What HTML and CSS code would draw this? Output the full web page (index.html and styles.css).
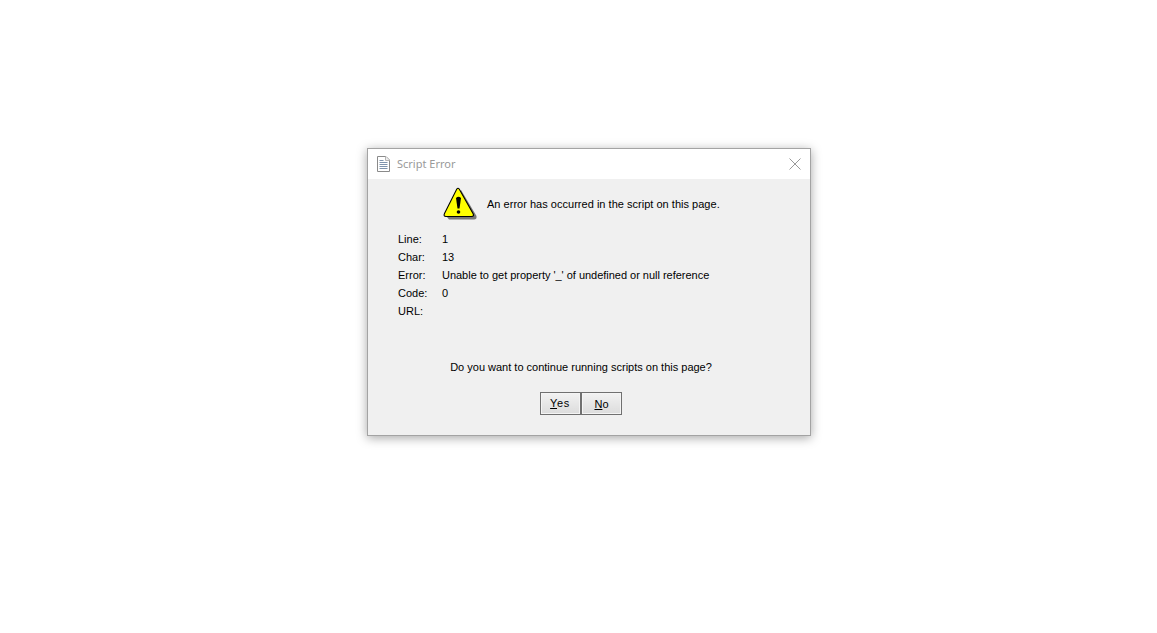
FILE: index.html
```html
<!DOCTYPE html>
<html lang="en">
<head>
<meta charset="utf-8">
<title>Script Error</title>
<link rel="stylesheet" href="styles.css">
</head>
<body>
<div class="dialog">
  <div class="titlebar">
    <svg class="doc-icon" width="14" height="16" viewBox="0 0 14 16">
      <path d="M.5.5h8.500l3.500 3.500v11.500H.5z" fill="#fff" stroke="#8a8a8a"/>
      <path d="M8.500.5v4h4" fill="#eee" stroke="#b5b5b5"/>
      <path d="M2.500 4.500h4M2.500 6.500h8M2.500 8.500h8M2.500 10.500h8M2.500 12.500h8" stroke="#7f94ad" fill="none"/>
    </svg>
    <span class="title">Script Error</span>
    <svg class="close" width="12" height="12" viewBox="0 0 12 12">
      <path d="M.5.5l11 11M11.500.5l-11 11" stroke="#999" fill="none"/>
    </svg>
  </div>
  <div class="content">
    <div class="headline">
      <svg class="warn" width="34" height="33" viewBox="0 0 34 33">
        <path d="M18 3 L33.500 29 Q34 32.500 31 32.500 H6 L4 30 Z" fill="#777"/>
        <path d="M13.800 2 Q15 .6 16.200 2 L30 26.500 Q31.500 29.500 28.500 29.500 H3 Q.2 29.500 1.500 26.500 Z" fill="#ffff00" stroke="#000" stroke-width="1.100"/>
        <path d="M13 11 Q15.500 8.500 18 11 L16.500 21.500 H14.500 Z" fill="#000"/>
        <circle cx="15.500" cy="25" r="1.800" fill="#000"/>
      </svg>
      <span>An error has occurred in the script on this page.</span>
    </div>
    <dl class="details">
      <dt>Line:</dt><dd>1</dd>
      <dt>Char:</dt><dd>13</dd>
      <dt>Error:</dt><dd>Unable to get property '_' of undefined or null reference</dd>
      <dt>Code:</dt><dd>0</dd>
      <dt>URL:</dt><dd></dd>
    </dl>
    <p class="question">Do you want to continue running scripts on this page?</p>
    <div class="buttons">
      <button class="btn btn-yes"><u>Y</u>es</button>
      <button class="btn btn-no"><u>N</u>o</button>
    </div>
  </div>
</div>
</body>
</html>
```
FILE: styles.css
```css
html, body { margin: 0; height: 100%; background: #fff; }
body {
  padding: 148px 0 0 367px;
  box-sizing: border-box;
  overflow: hidden;
  font-family: "Liberation Sans", Arial, sans-serif;
  font-size: 11px;
  color: #000;
}
.dialog {
  width: 444px;
  height: 288px;
  box-sizing: border-box;
  border: 1px solid #a3a3a3;
  background: #f0f0f0;
  box-shadow: 0 2px 10px rgba(0,0,0,.35);
  display: flex;
  flex-direction: column;
}
.titlebar {
  height: 30px;
  flex: none;
  background: #fff;
  display: flex;
  align-items: center;
  padding: 0 9px;
}
.doc-icon { flex: none; }
.title {
  margin-left: 6px;
  padding-bottom: 2px;
  font-size: 11px;
  color: #999;
  font-family: "Noto Sans", sans-serif;
}
.close { margin-left: auto; flex: none; }
.content { flex: 1; display: flex; flex-direction: column; }
.headline {
  display: flex;
  align-items: center;
  margin: 8px 0 0 75px;
  height: 33px;
}
.headline span { margin-left: 10px; letter-spacing: .02px; }
.details {
  display: grid;
  grid-template-columns: 44px 1fr;
  grid-auto-rows: 18px;
  align-items: center;
  margin: 10px 0 0 30px;
}
.details dt, .details dd { margin: 0; }
.details dd { letter-spacing: -.02px; }
.question { margin: 38px 0 0; text-align: center; line-height: 18px; padding-right: 16px; }
.buttons { display: flex; justify-content: center; margin-top: 16px; padding-right: 16px; }
.btn {
  width: 41px;
  height: 23px;
  padding: 0;
  border: 1px solid #707070;
  background: linear-gradient(#f2f2f2, #dcdcdc);
  box-shadow: inset 0 0 0 1px #f4f4f4;
  font: inherit;
  color: #000;
}
.btn-no { padding-top: 1px; }
.btn-yes { padding: 0 1px 1px 0; letter-spacing: .6px; }
```
